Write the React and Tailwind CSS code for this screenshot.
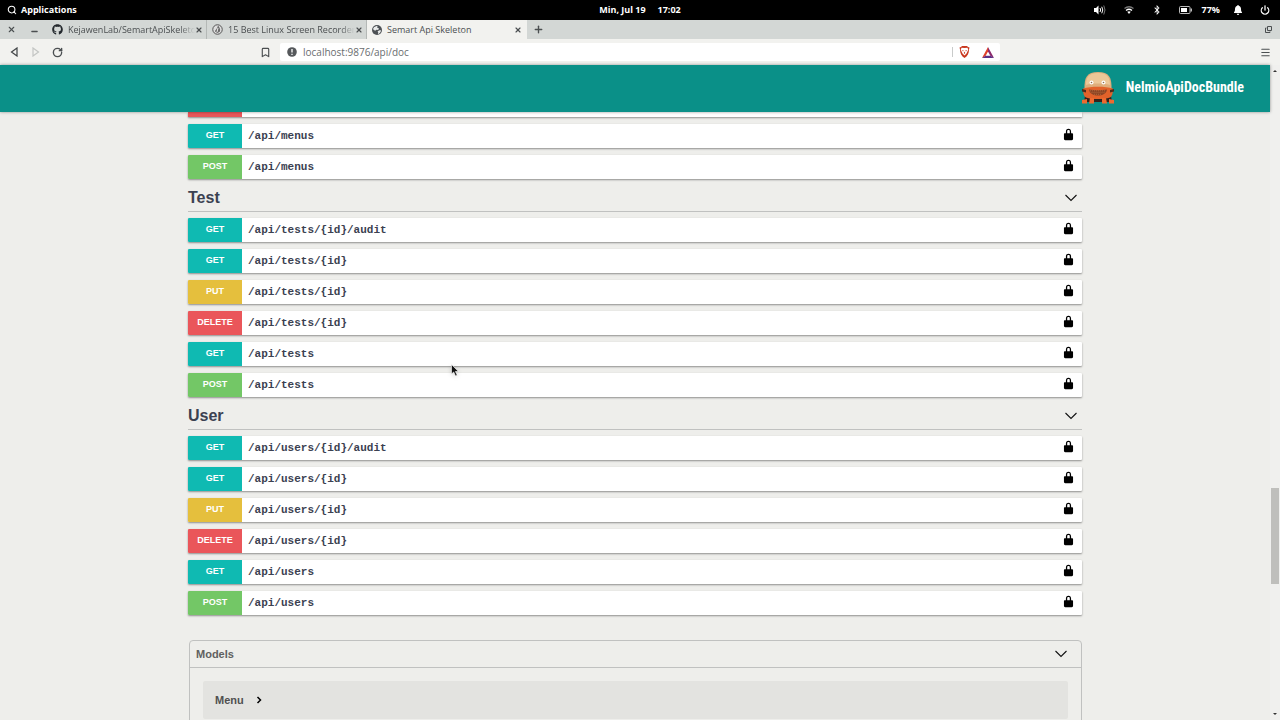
import React from 'react';
import { FaGithub, FaBluetoothB } from 'react-icons/fa';
import { Search, Power, X, Minus, Plus, RotateCw, Bookmark, Menu as MenuIcon } from 'lucide-react';

const GROUPS = [
  {
    name: 'Test',
    endpoints: [
      ['GET', '/api/tests/{id}/audit'],
      ['GET', '/api/tests/{id}'],
      ['PUT', '/api/tests/{id}'],
      ['DELETE', '/api/tests/{id}'],
      ['GET', '/api/tests'],
      ['POST', '/api/tests'],
    ],
  },
  {
    name: 'User',
    endpoints: [
      ['GET', '/api/users/{id}/audit'],
      ['GET', '/api/users/{id}'],
      ['PUT', '/api/users/{id}'],
      ['DELETE', '/api/users/{id}'],
      ['GET', '/api/users'],
      ['POST', '/api/users'],
    ],
  },
];

const MENU_ENDPOINTS = [
  ['GET', '/api/menus'],
  ['POST', '/api/menus'],
];

const METHOD_BG = {
  GET: 'bg-[#0fbab2]',
  POST: 'bg-[#73c766]',
  PUT: 'bg-[#e5bf3d]',
  DELETE: 'bg-[#ea565a]',
};

function Mascot() {
  return (
    <svg viewBox="0 0 32 32" className="w-8 h-8 flex-shrink-0" aria-hidden="true">
      <path d="M3 24h26l1 6H2z" fill="#33231c" />
      <path d="M2.500 18C2 5 5 0 16 0s14 5 13.500 18z" fill="#dfae7c" />
      <path d="M4 13C4 5 7 1 16 1s12 4 12 12c-6-2-18-2-24 0z" fill="#ecc797" />
      <path d="M1 16.500c8-2.500 22-2.500 30 0 0 5-1 8-3 9-7 2-17 2-24 0-2-1-3-4-3-9z" fill="#e2622a" />
      <path d="M7 17.500c6 1 12 1 18 0-.5 4-4.500 6-9 6s-8.500-2-9-6z" fill="#8e4424" />
      <path d="M8 18.800h16M9.500 20.600h13M12 22.300h8" stroke="#b5713f" strokeWidth=".8" strokeDasharray="1 1" />
      <path d="M0 17l4 1v2.500l-4-1zM32 17l-4 1v2.500l4-1z" fill="#4c2a1c" />
      <path d="M0 28l5-1v4.500H0zM8 26h4v5.500H7zM20 26h4l1 5.500h-5zM27 27l5 1v3.500h-5z" fill="#ee6a30" />
      <circle cx="9.500" cy="10.500" r="2" fill="#fff" />
      <circle cx="21.500" cy="10.500" r="2" fill="#fff" />
      <circle cx="9.500" cy="10.500" r=".8" fill="#8d6a48" />
      <circle cx="21.500" cy="10.500" r=".8" fill="#8d6a48" />
    </svg>
  );
}

function Globe() {
  return (
    <svg viewBox="0 0 16 16" className="w-[10px] h-[10px] flex-shrink-0" aria-hidden="true">
      <circle cx="8" cy="8" r="8" fill="#4d5155" />
      <path d="M2 5c2-3 5-3.500 7-3.500L8 4l3 1-1 3-3-.5L5 9 2 7zM9 10l4-2 1.500 1c-1 3-3 5-5 5.500L10 12z" fill="#e9ebea" />
    </svg>
  );
}

function Lock() {
  return (
    <svg viewBox="0 0 20 20" className="w-[13px] h-[13px]" aria-hidden="true">
      <path d="M15.800 8H14V5.600C14 2.703 12.665 1 10 1 7.334 1 6 2.703 6 5.600V8H4c-.553 0-1 .646-1 1.199V17c0 .549.428 1.139.951 1.307l1.197.387C5.672 18.861 6.550 19 7.100 19h5.800c.549 0 1.428-.139 1.951-.307l1.196-.387c.524-.167.953-.757.953-1.306V9.199C17 8.646 16.352 8 15.800 8zM12 8H8V5.199C8 3.754 8.797 3 10 3c1.203 0 2 .754 2 2.199V8z" />
    </svg>
  );
}

function Chevron() {
  return (
    <svg viewBox="0 0 12 8" className="w-3 h-2" fill="none" stroke="#111" aria-hidden="true">
      <path d="M.5 1L6 6.500 11.500 1" strokeWidth="1.100" />
    </svg>
  );
}

function SystemBar() {
  return (
    <header className="h-5 flex-shrink-0 grid grid-cols-3 items-center bg-black text-white text-[9px] font-bold">
      <div className="flex items-center gap-1 pl-[7px]">
        <Search size={10} strokeWidth={2.5} />
        <button className="font-bold">Applications</button>
      </div>
      <div className="flex justify-center gap-3">
        <span>Min, Jul 19</span>
        <span>17:02</span>
      </div>
      <div className="flex items-center justify-end pr-[10px]">
        <svg viewBox="0 0 24 20" className="w-3 h-[10px] mr-[18px]" fill="none" stroke="#fff" strokeWidth="2" aria-hidden="true">
          <path d="M0 6h4l5-5v18l-5-5H0z" fill="#fff" stroke="none" />
          <path d="M12 6q2.500 4 0 8M15.500 3.500q4 6.500 0 13" />
          <path d="M19.500 1q5 9 0 18" stroke="#777" />
        </svg>
        <svg viewBox="0 0 20 16" className="w-[10px] h-2 mr-[18px]" fill="none" strokeWidth="2.500" aria-hidden="true">
          <path d="M1 5q9-7 18 0" stroke="#777" />
          <path d="M4 9q6-5 12 0" stroke="#fff" />
          <path d="M6.500 11.500q3.500-2.500 7 0L10 16z" fill="#fff" />
        </svg>
        <FaBluetoothB size={10} className="mr-[17px]" />
        <svg viewBox="0 0 13 8" className="w-[13px] h-2 mr-[10px]" aria-hidden="true">
          <rect x=".5" y=".5" width="10.500" height="7" rx="1" fill="none" stroke="#bbb" />
          <path d="M2 2h6v4H2z" fill="#fff" />
          <path d="M11.500 2.500H13v3h-1.500z" fill="#bbb" />
        </svg>
        <span className="mr-[14px]">77%</span>
        <svg viewBox="0 0 16 20" className="w-2 h-[10px] mr-[18px]" fill="#fff" aria-hidden="true">
          <path d="M8 0c1 0 1.500.6 1.500 1.500C12.500 2.300 14 5 14 8c0 4 1 5 2 7v1H0v-1c1-2 2-3 2-7 0-3 1.500-5.700 4.500-6.500C6.500.6 7 0 8 0zM5.500 17.500h5Q10 20 8 20t-2.500-2.500z" />
        </svg>
        <Power size={10} strokeWidth={3} />
      </div>
    </header>
  );
}

function Tab({ icon, title, active }) {
  return (
    <div className={`w-40 h-full flex items-center pl-[5px] ${active ? 'pr-[5px] bg-[#f2f2ef]' : 'pr-[3px] border-r border-[#b4b8b6]'}`}>
      {icon}
      <button className={`flex-1 min-w-0 ml-[5px] text-left whitespace-nowrap ${active ? '' : '[mask-image:linear-gradient(to_right,#000_88%,transparent)]'}`}>
        {title}
      </button>
      <button aria-label={`Close ${title}`} className="flex-shrink-0">
        <X size={8} strokeWidth={3.5} />
      </button>
    </div>
  );
}

function BrowserChrome() {
  return (
    <div className="flex-shrink-0 text-[#4b4f51]">
      <div className="h-[19px] flex items-center bg-[#d3d7d5] text-[9px]">
        <button aria-label="Close window" className="ml-[7px] mr-[14px]"><X size={9} strokeWidth={3} /></button>
        <button aria-label="Minimize window" className="mr-2 pt-1"><Minus size={9} strokeWidth={3.5} /></button>
        <Tab icon={<FaGithub size={11} className="flex-shrink-0 text-[#24292e]" />} title="KejawenLab/SemartApiSkeleto" />
        <Tab
          icon={
            <svg viewBox="0 0 22 22" className="w-[11px] h-[11px] flex-shrink-0" aria-hidden="true">
              <circle cx="11" cy="11" r="9.500" fill="#ddd" stroke="#555" strokeWidth="2" />
              <path d="M12 3c3 3 5 7 4 12l-5 3-5-3c0-3 4-4 6-12z" fill="#6a6a6a" />
              <path d="M12 8l-2 8" stroke="#eee" strokeWidth="2" />
            </svg>
          }
          title="15 Best Linux Screen Recorder"
        />
        <Tab icon={<Globe />} title="Semart Api Skeleton" active />
        <button aria-label="New tab" className="ml-[6px]"><Plus size={11} strokeWidth={3} /></button>
        <button aria-label="Restore window" className="ml-auto mr-2">
          <svg viewBox="0 0 14 14" className="w-[7px] h-[7px]" fill="none" stroke="#4b4f51" strokeWidth="2" aria-hidden="true">
            <path d="M5 1h8v8H5zM3 4H1v9h9v-2" />
          </svg>
        </button>
      </div>

      <div className="h-[26px] flex items-center bg-[#f2f2ef]">
        <button aria-label="Back" className="ml-[10px] mr-3">
          <svg viewBox="0 0 9 10" className="w-[9px] h-[10px]" fill="none" stroke="#3f4345" strokeWidth="1.200" aria-hidden="true">
            <path d="M7 1v8L1.500 5z" />
          </svg>
        </button>
        <button aria-label="Forward" className="mr-3" disabled>
          <svg viewBox="0 0 9 10" className="w-[9px] h-[10px]" fill="none" stroke="#c3c5c3" strokeWidth="1.200" aria-hidden="true">
            <path d="M2 1v8l5.500-4z" />
          </svg>
        </button>
        <button aria-label="Reload"><RotateCw size={11} strokeWidth={3} /></button>
        <div className="flex-1 flex items-center pl-[197px]">
          <button aria-label="Bookmark" className="mr-[9px]"><Bookmark size={11} strokeWidth={2.5} /></button>
          <div className="flex-1 h-[18px] flex items-center bg-white rounded-xs pl-[7px] pr-[6px]">
            <svg viewBox="0 0 10 10" className="w-[10px] h-[10px] mr-[6px]" aria-hidden="true">
              <circle cx="5" cy="5" r="4.800" fill="#55585b" />
              <path d="M5 2v3.500M5 6.700v1.300" stroke="#fff" strokeWidth="1.300" />
            </svg>
            <input
              aria-label="Address"
              defaultValue="localhost:9876/api/doc"
              className="flex-1 min-w-0 text-[10px] text-[#6a6d6f] outline-none"
            />
            <span className="w-px h-[10px] bg-[#c9cbca] mr-[6px]" />
            <button aria-label="Brave shields" className="mr-3">
              <svg viewBox="0 0 22 24" className="w-[11px] h-3" aria-hidden="true">
                <path d="M6 0h10l2 2 3 1-1 4c0 8-3 13-9 17C5 20 2 15 2 7L1 3l3-1z" fill="#c9381f" />
                <path d="M11 4l6-.5 1.500 4L15 15l-4 4-4-4-3.500-7.500 1.500-4z" fill="#fff" />
                <path d="M6 8l3.500 1L8 11zM16 8l-3.500 1L14 11zM11 11l1.500 3-1.500 2-1.500-2z" fill="#c9381f" />
              </svg>
            </button>
            <button aria-label="Brave rewards">
              <svg viewBox="0 0 24 22" className="w-3 h-[11px]" aria-hidden="true">
                <path d="M12 0L0 22l7-4 5-9z" fill="#e0402a" />
                <path d="M12 0l12 22-7-4-5-9z" fill="#8c2a6c" />
                <path d="M0 22h24l-7-4.500H7z" fill="#5b2f86" />
              </svg>
            </button>
          </div>
        </div>
        <button aria-label="Browser menu" className="ml-[260px] mr-[9px]"><MenuIcon size={11} strokeWidth={2.5} /></button>
      </div>
    </div>
  );
}

function Endpoint({ method, path }) {
  return (
    <div className="h-6 flex items-stretch bg-white rounded-[1px] shadow-[0_1px_2px_rgba(0,0,0,0.4)]">
      <button className="flex-1 flex items-center text-left">
        <span className={`w-[54px] h-full flex items-center justify-center rounded-l-[1px] text-white text-[9px] font-bold ${METHOD_BG[method]}`}>
          {method}
        </span>
        <span className="pl-[6px] font-['Liberation_Mono',monospace] text-[11px] font-bold text-[#3b4151]">{path}</span>
      </button>
      <button aria-label={`Authorize ${method} ${path}`} className="pr-[7px] pb-1 text-black">
        <Lock />
      </button>
    </div>
  );
}

function EndpointList({ endpoints }) {
  return (
    <div className="flex flex-col gap-[7px]">
      {endpoints.map(([method, path]) => <Endpoint key={method + path} method={method} path={path} />)}
    </div>
  );
}

function Group({ name, endpoints }) {
  return (
    <section>
      <button className="w-full h-[26px] mb-[6px] flex items-center justify-between border-b border-[#c0c1c0] pr-[5px] pb-px">
        <h3 className="text-base font-bold text-[#3b4151]">{name}</h3>
        <Chevron />
      </button>
      <EndpointList endpoints={endpoints} />
    </section>
  );
}

function Scrollbar() {
  return (
    <div className="w-[10px] flex-shrink-0 flex flex-col items-center bg-[#f0f0ee]" aria-hidden="true">
      <svg viewBox="0 0 10 10" className="w-[10px] h-[10px]"><path d="M3 7l2-2 2 2z" fill="#333" /></svg>
      <div className="grow-[413]" />
      <div className="w-2 grow-[96] bg-[#bfbfbc]" />
      <div className="grow-[126]" />
      <svg viewBox="0 0 10 10" className="w-[10px] h-[10px]"><path d="M3 3l2 2 2-2z" fill="#333" /></svg>
    </div>
  );
}

export default function App() {
  return (
    <div className="relative h-screen flex flex-col overflow-hidden bg-[#eeeeeb] font-['Open_Sans','Noto_Sans',sans-serif]">
      <SystemBar />
      <BrowserChrome />

      <div className="flex-1 min-h-0 flex font-['Liberation_Sans',Arial,sans-serif]">
        <div className="flex-1 min-w-0 flex flex-col">
          <header className="h-[47px] flex-shrink-0 flex items-center justify-end pr-[26px] bg-[#0a9088] shadow-[0_0_3px_rgba(0,0,0,0.4)] z-10">
            <a href="#doc" className="flex items-center gap-3 pb-[2px] text-white">
              <Mascot />
              <span className="font-['Roboto_Condensed',Roboto,sans-serif] text-[14px] font-bold">NelmioApiDocBundle</span>
            </a>
          </header>

          <main className="flex-1 min-h-0 overflow-hidden">
            <div className="w-full max-w-[894px] mx-auto flex flex-col gap-[7px]">
              <div className="h-[5px] bg-white shadow-[0_1px_2px_rgba(0,0,0,0.4)]">
                <div className={`w-[54px] h-full ${METHOD_BG.DELETE}`} />
              </div>
              <EndpointList endpoints={MENU_ENDPOINTS} />
              {GROUPS.map(group => <Group key={group.name} {...group} />)}

              <section className="mt-[18px] ml-px border border-[#c0c1c0] rounded-sm text-[11px] font-bold text-[#606060]">
                <button className="w-full h-[27px] flex items-center justify-between border-b border-[#c0c1c0] pl-[6px] pr-[14px]">
                  <h4>Models</h4>
                  <Chevron />
                </button>
                <div className="p-[13px]">
                  <button className="w-full h-[38px] flex items-center gap-3 px-3 bg-[#e3e3e0] rounded-xs text-[#505050]">
                    Menu
                    <svg viewBox="0 0 6 8" className="w-[6px] h-2" fill="none" stroke="#000" strokeWidth="1.500" aria-hidden="true">
                      <path d="M1.500 1l3 3-3 3" />
                    </svg>
                  </button>
                </div>
              </section>
            </div>
          </main>
        </div>
        <Scrollbar />
      </div>

      <svg viewBox="0 0 8 13" className="absolute left-[451px] top-[364px] w-2 h-[13px] drop-shadow-sm" aria-hidden="true">
        <path d="M.5.5v9.500l2.200-2 1.800 4 1.700-.8-1.800-3.700h3z" fill="#111" stroke="#fff" strokeWidth=".6" />
      </svg>
    </div>
  );
}
